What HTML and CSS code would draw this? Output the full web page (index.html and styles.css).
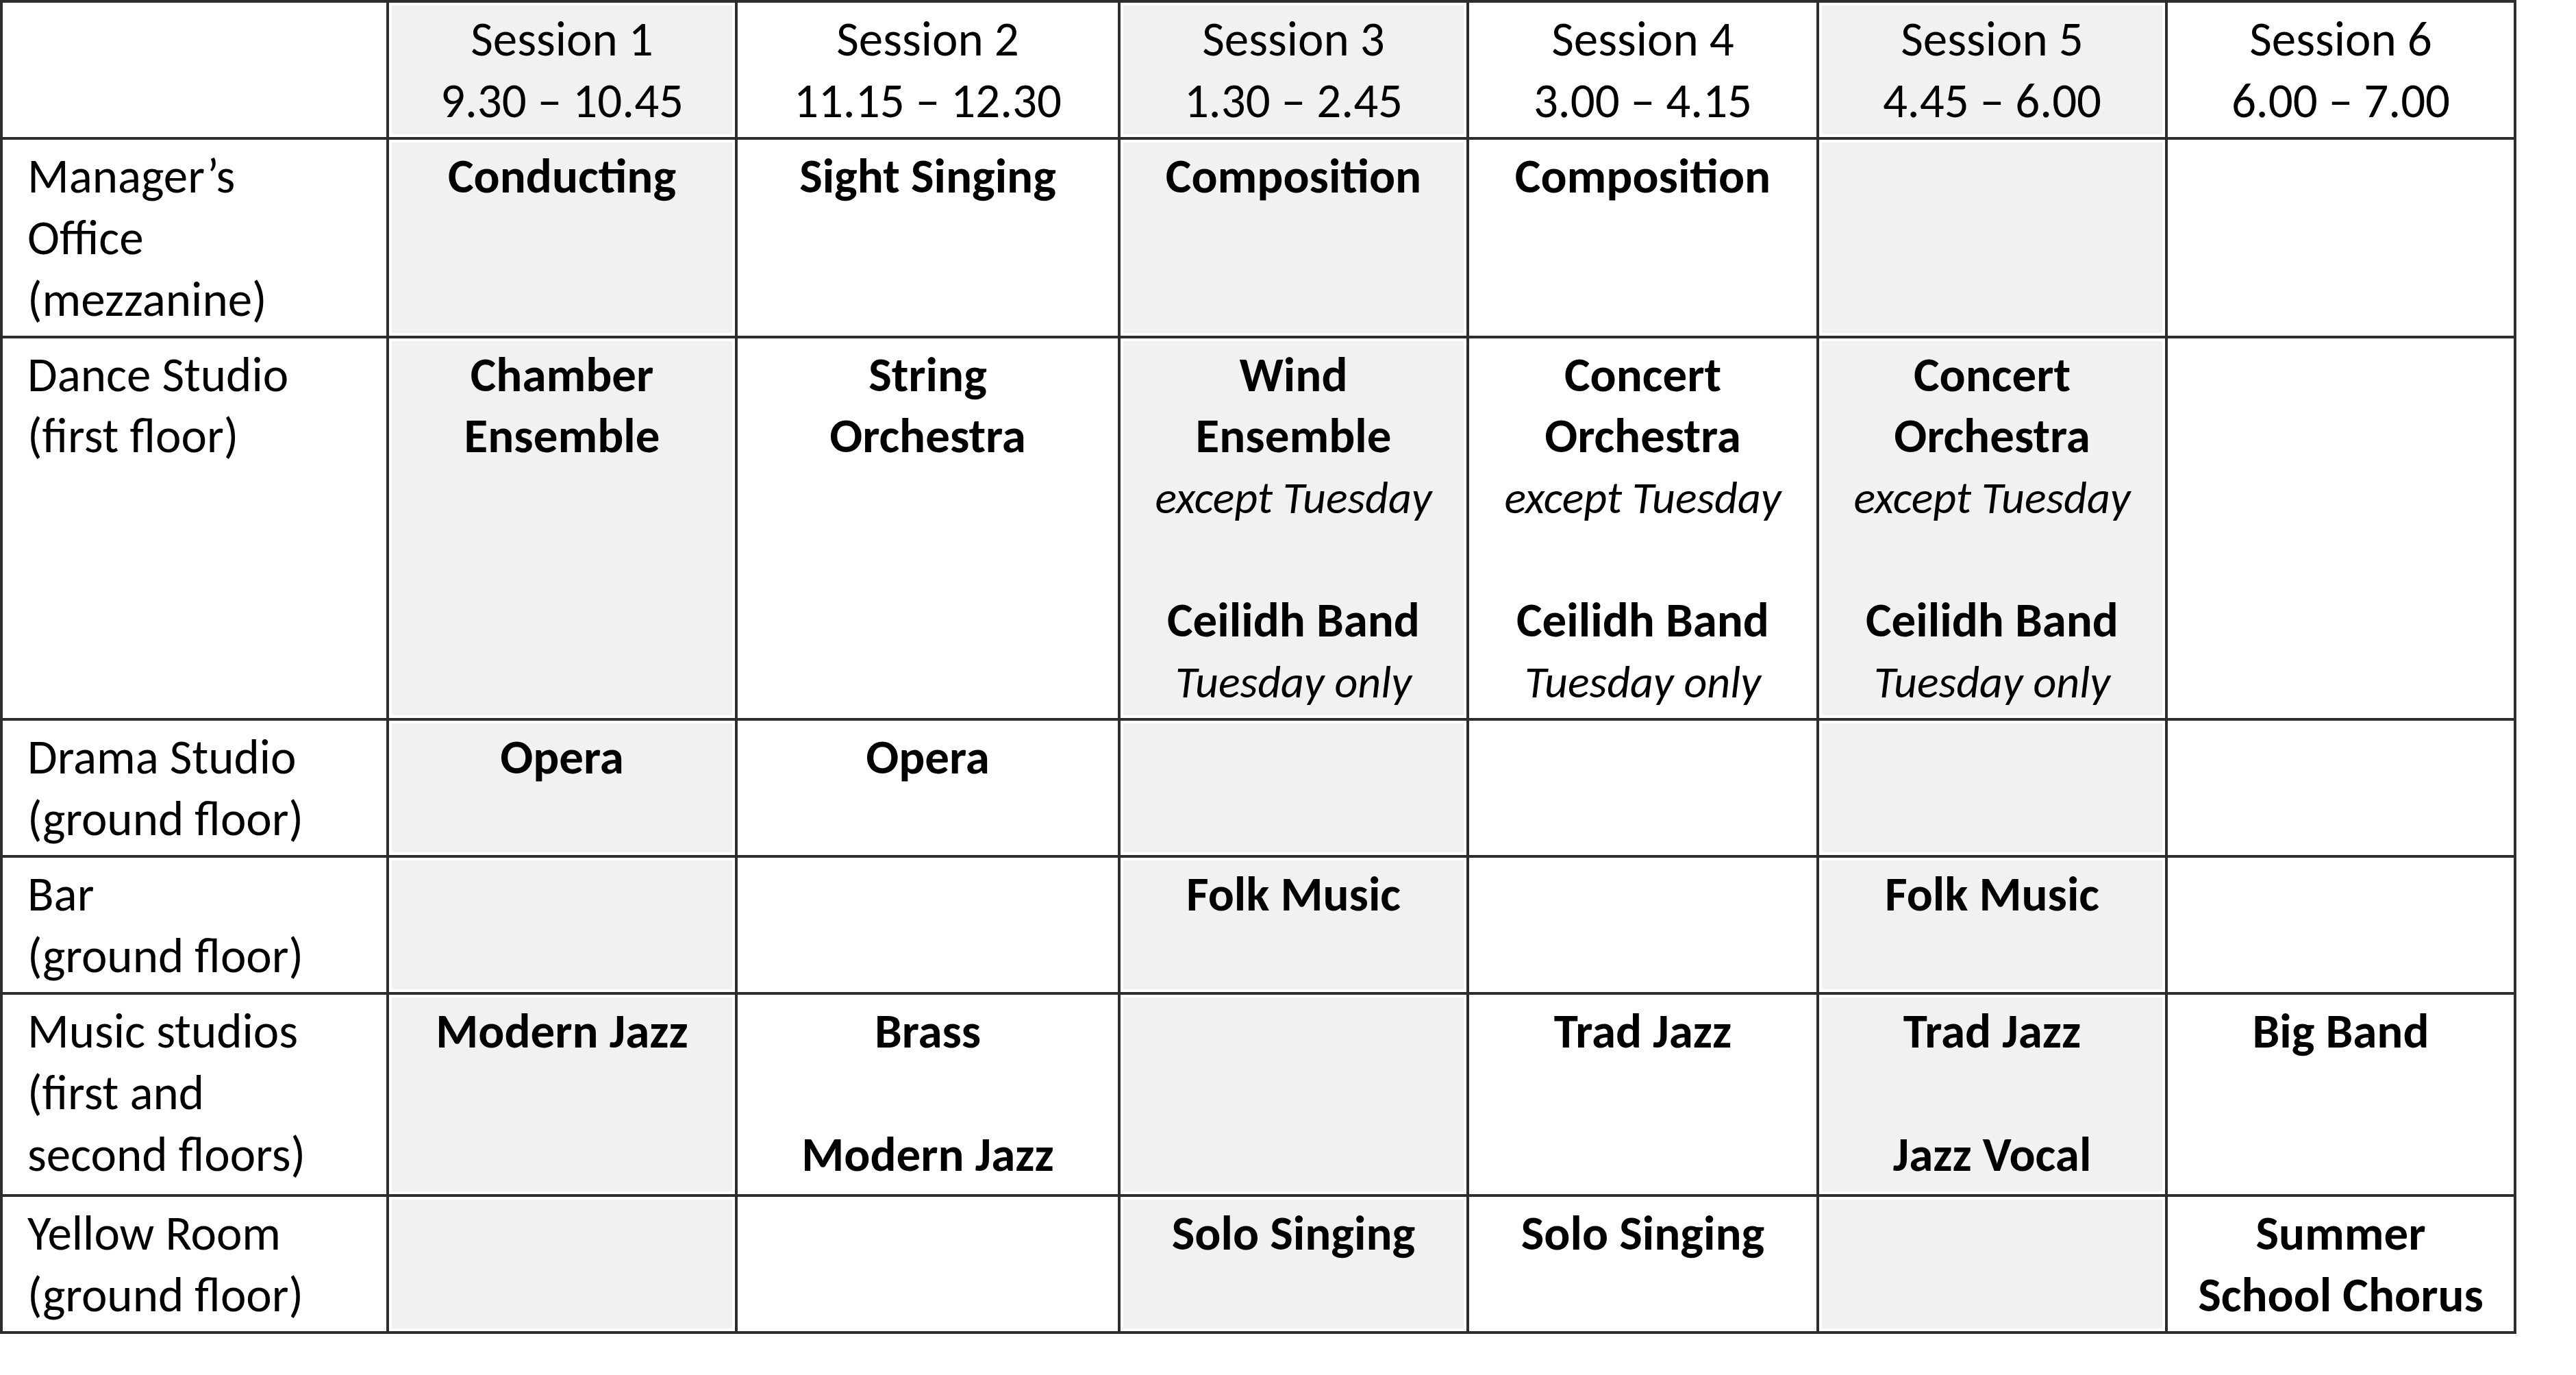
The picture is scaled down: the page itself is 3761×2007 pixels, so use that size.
FILE: index.html
```html
<!DOCTYPE html>
<html lang="en">
<head>
<meta charset="utf-8">
<title>Summer School Timetable</title>
<link rel="stylesheet" href="styles.css">
</head>
<body>
<table class="timetable">
  <colgroup>
    <col class="c-room">
    <col class="c-s1">
    <col class="c-s2">
    <col class="c-s3">
    <col class="c-s4">
    <col class="c-s5">
    <col class="c-s6">
  </colgroup>
  <thead>
    <tr>
      <th class="room"></th>
      <th class="shade">Session 1<br>9.30 – 10.45</th>
      <th>Session 2<br>11.15 – 12.30</th>
      <th class="shade">Session 3<br>1.30 – 2.45</th>
      <th>Session 4<br>3.00 – 4.15</th>
      <th class="shade">Session 5<br>4.45 – 6.00</th>
      <th>Session 6<br>6.00 – 7.00</th>
    </tr>
  </thead>
  <tbody>
    <tr>
      <td class="room">Manager’s<br>Office<br>(mezzanine)</td>
      <td class="shade"><span class="act">Conducting</span></td>
      <td><span class="act">Sight Singing</span></td>
      <td class="shade"><span class="act">Composition</span></td>
      <td><span class="act">Composition</span></td>
      <td class="shade"></td>
      <td></td>
    </tr>
    <tr class="row-tight">
      <td class="room">Dance Studio<br>(first floor)</td>
      <td class="shade"><span class="act">Chamber<br>Ensemble</span></td>
      <td><span class="act">String<br>Orchestra</span></td>
      <td class="shade"><span class="act">Wind<br>Ensemble</span><br><span class="note">except Tuesday</span><br><br><span class="act">Ceilidh Band</span><br><span class="note">Tuesday only</span></td>
      <td><span class="act">Concert<br>Orchestra</span><br><span class="note">except Tuesday</span><br><br><span class="act">Ceilidh Band</span><br><span class="note">Tuesday only</span></td>
      <td class="shade"><span class="act">Concert<br>Orchestra</span><br><span class="note">except Tuesday</span><br><br><span class="act">Ceilidh Band</span><br><span class="note">Tuesday only</span></td>
      <td></td>
    </tr>
    <tr>
      <td class="room">Drama Studio<br>(ground floor)</td>
      <td class="shade"><span class="act">Opera</span></td>
      <td><span class="act">Opera</span></td>
      <td class="shade"></td>
      <td></td>
      <td class="shade"></td>
      <td></td>
    </tr>
    <tr>
      <td class="room">Bar<br>(ground floor)</td>
      <td class="shade"></td>
      <td></td>
      <td class="shade"><span class="act">Folk Music</span></td>
      <td></td>
      <td class="shade"><span class="act">Folk Music</span></td>
      <td></td>
    </tr>
    <tr class="row-tall">
      <td class="room">Music studios<br>(first and<br>second floors)</td>
      <td class="shade"><span class="act">Modern Jazz</span></td>
      <td><span class="act">Brass</span><br><br><span class="act">Modern Jazz</span></td>
      <td class="shade"></td>
      <td><span class="act">Trad Jazz</span></td>
      <td class="shade"><span class="act">Trad Jazz</span><br><br><span class="act">Jazz Vocal</span></td>
      <td><span class="act">Big Band</span></td>
    </tr>
    <tr>
      <td class="room">Yellow Room<br>(ground floor)</td>
      <td class="shade"></td>
      <td></td>
      <td class="shade"><span class="act">Solo Singing</span></td>
      <td><span class="act">Solo Singing</span></td>
      <td class="shade"></td>
      <td><span class="act">Summer<br>School Chorus</span></td>
    </tr>
  </tbody>
</table>
</body>
</html>
```

FILE: styles.css
```css
html, body {
  margin: 0;
  padding: 0;
  background: #ffffff;
}

body {
  font-family: Calibri, Carlito, Lato, "Open Sans", sans-serif;
  color: #000;
}

.timetable {
  border-collapse: collapse;
  table-layout: fixed;
  width: 3670px;
  font-size: 71px;
  line-height: 90px;
}

.c-room { width: 564px; }
.c-s1 { width: 509px; }
.c-s2 { width: 559px; }
.c-s3 { width: 509px; }
.c-s4 { width: 511px; }
.c-s5 { width: 509px; }
.c-s6 { width: 509px; }

.timetable th,
.timetable td {
  border: 4px solid #2e2e2e;
  padding: 8px 8px 8px;
  vertical-align: top;
  text-align: center;
  font-weight: 400;
}

.timetable .row-tight td {
  line-height: 89px;
}

.timetable .row-tall td {
  padding-bottom: 13px;
}

.timetable .room {
  text-align: left;
  padding-left: 36px;
}

.timetable .shade {
  background: #f1f1f1;
  box-shadow: inset 0 0 0 4px #fff;
}

.act {
  font-weight: 700;
}

.note {
  font-style: italic;
  font-size: 66px;
}
```
